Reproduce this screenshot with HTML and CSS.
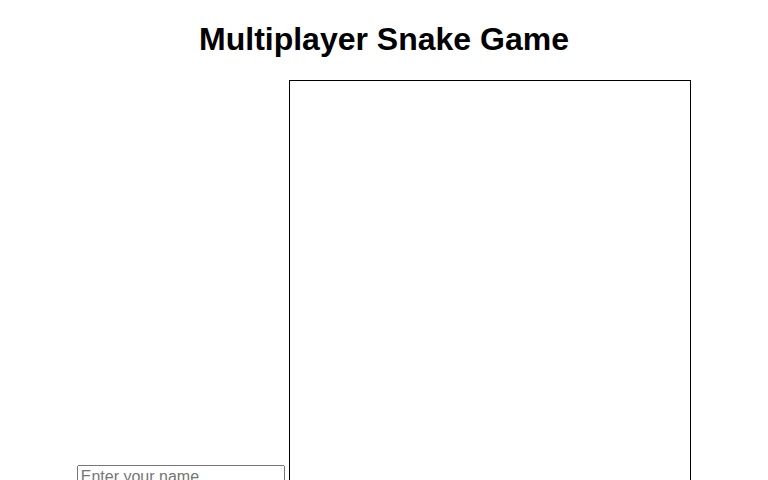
FILE: index.html
```html
<!DOCTYPE html>
<html lang="en">
<head>
    <meta charset="UTF-8">
    <meta name="viewport" content="width=device-width, initial-scale=1.0">
    <title>Multiplayer Snake Game</title>
    <link rel="stylesheet" href="styles.css">
</head>
<body>
    <h1>Multiplayer Snake Game</h1>
    <div class="game">
        <input type="text" id="playerName" class="name-input" placeholder="Enter your name">
        <canvas id="gameCanvas" class="board" width="400" height="400"></canvas>
    </div>
</body>
</html>
```

FILE: styles.css
```css
body {
    font-family: "Liberation Sans", Arial, sans-serif;
    text-align: center;
    margin: 0;
    padding: 0 8px;
}
h1 {
    font-size: 32px;
    margin: 0.67em 0;
}
.name-input {
    font-family: "Liberation Sans", Arial, sans-serif;
    font-size: 16px;
    width: 200px;
}
.board {
    border: 1px solid black;
}
```
